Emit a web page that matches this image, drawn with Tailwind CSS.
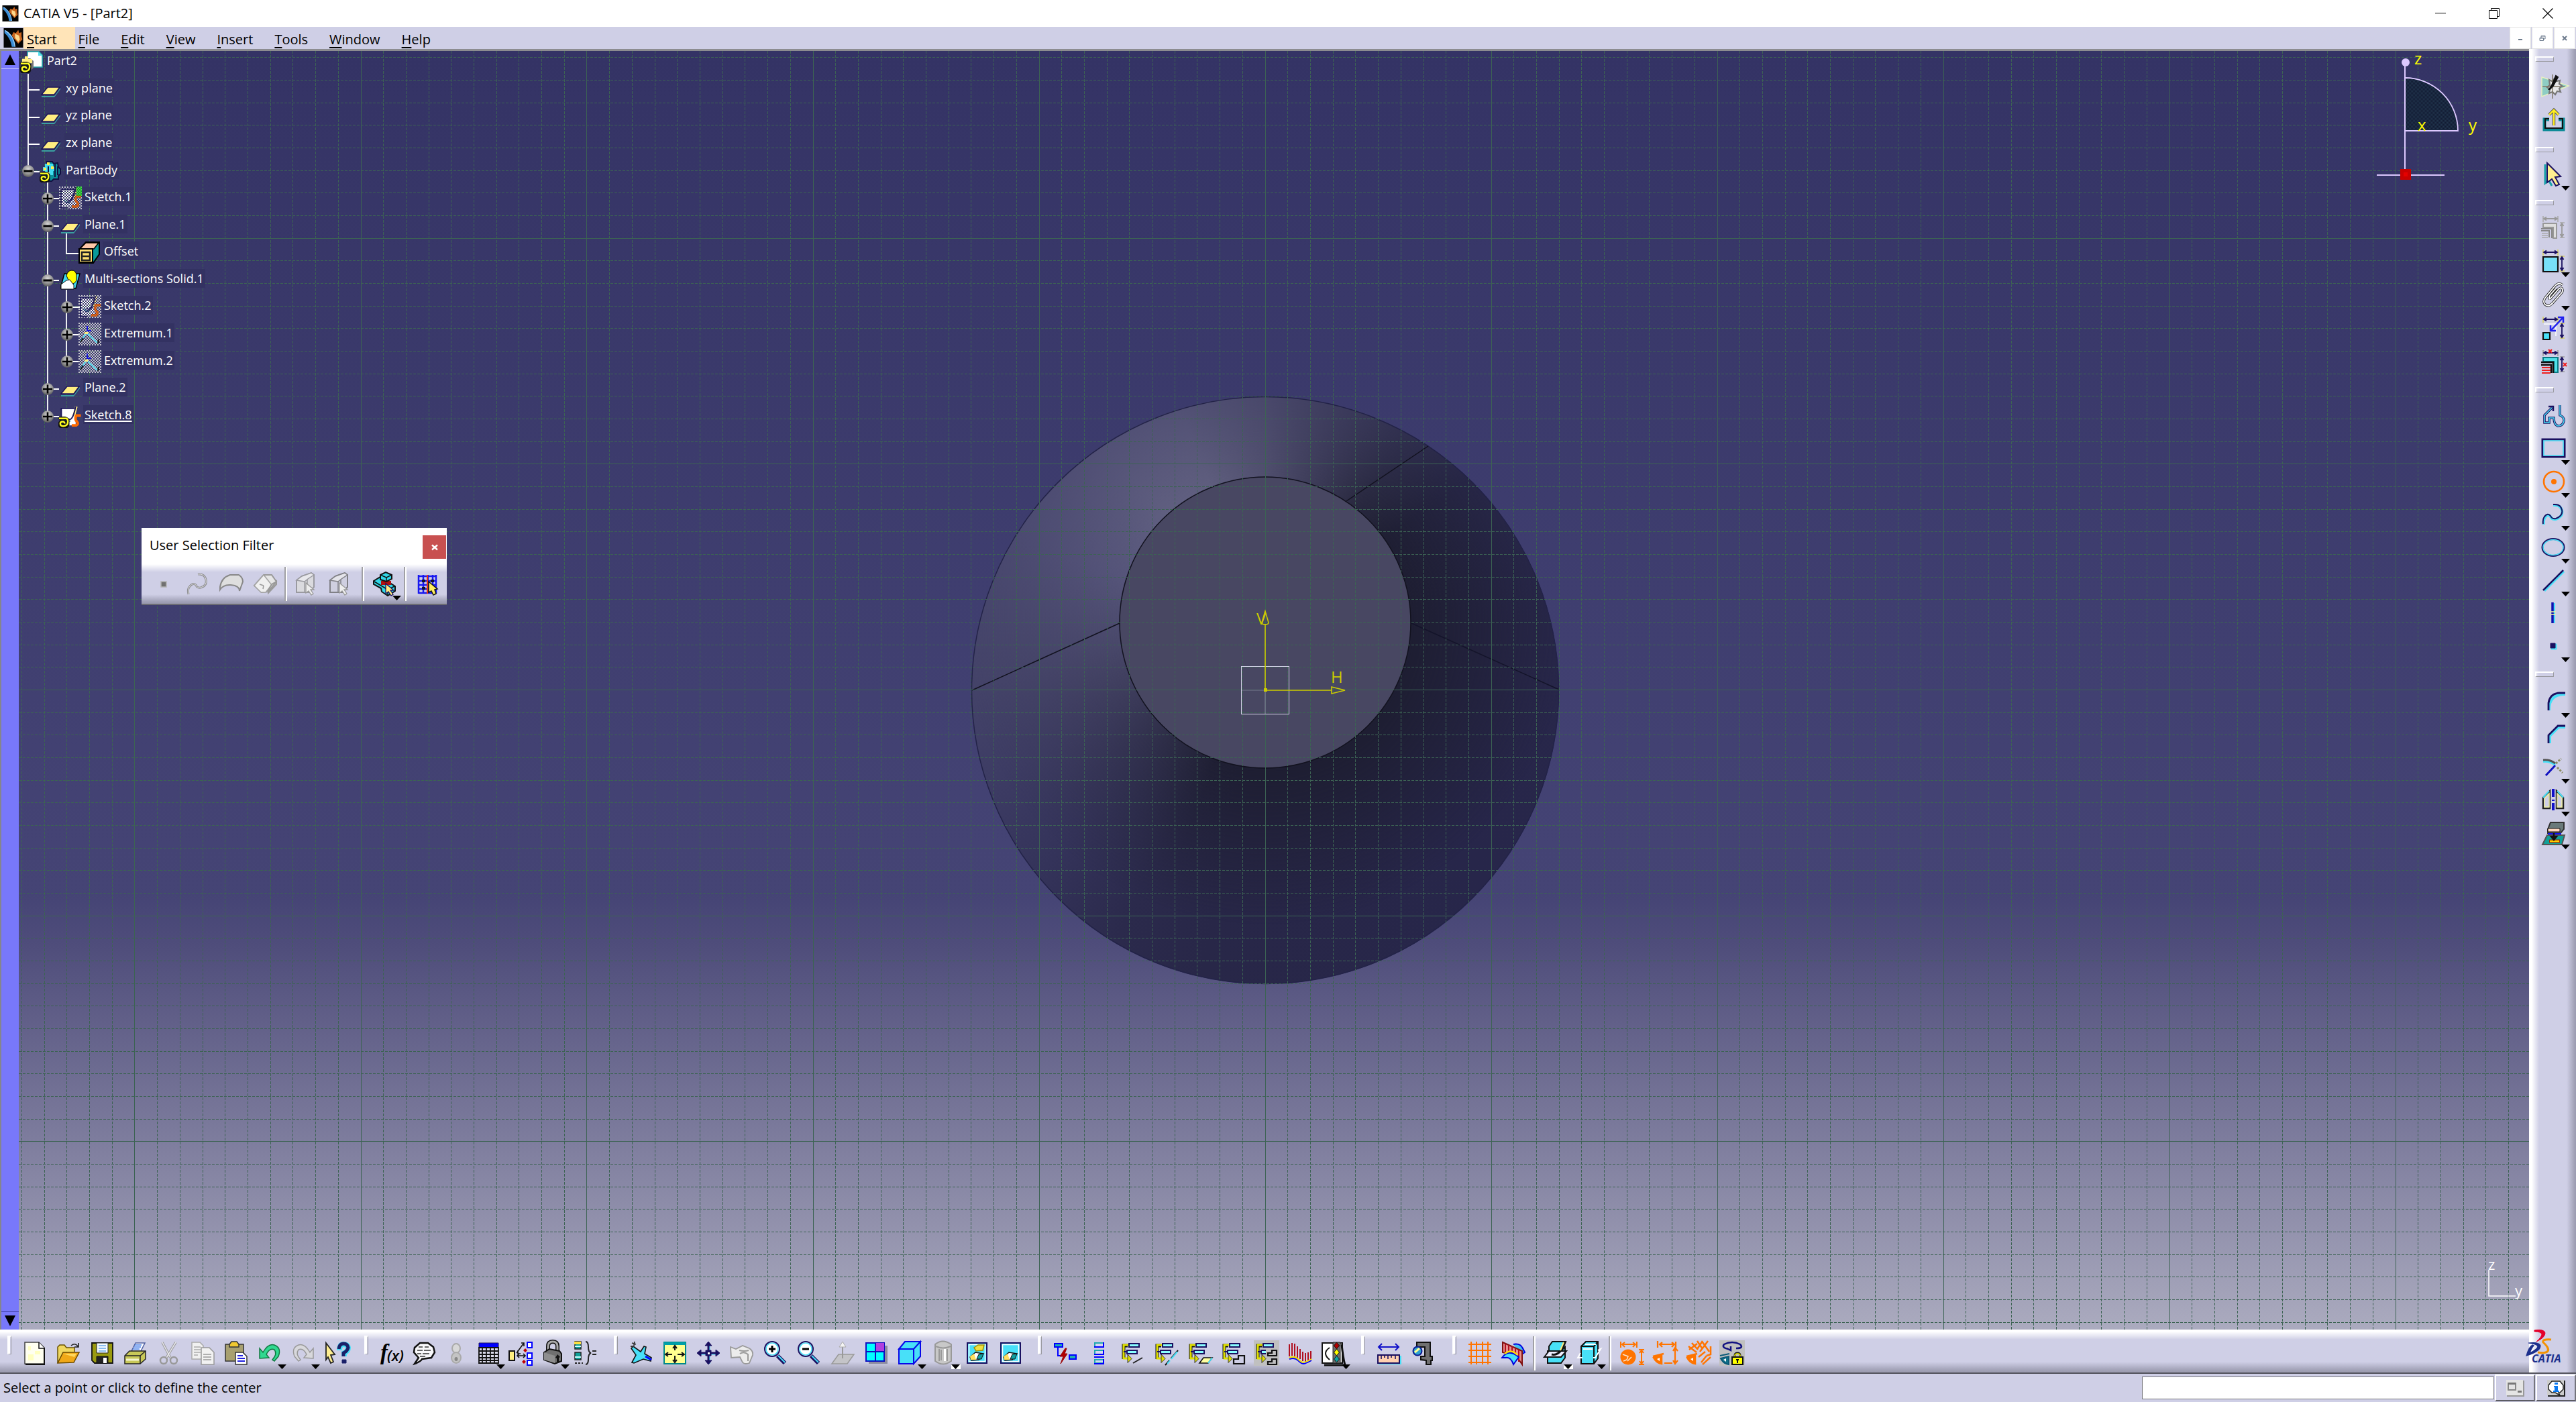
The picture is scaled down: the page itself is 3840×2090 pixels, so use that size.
<!DOCTYPE html>
<html lang="en">
<head>
<meta charset="utf-8">
<title>CATIA V5 - [Part2]</title>
<script src="https://cdn.jsdelivr.net/npm/@tailwindcss/browser@4"></script>
</head>
<body class="flex h-screen flex-col overflow-hidden bg-[#cfcfe6] font-['Open_Sans',sans-serif] text-xl leading-6 text-black">

<!-- shared defs -->
<svg class="absolute size-0" aria-hidden="true">
  <defs>
    <radialGradient id="ball" cx=".5" cy=".35" r=".65"><stop offset="0" stop-color="#d8d8d8"/><stop offset=".6" stop-color="#949494"/><stop offset="1" stop-color="#5a5a5a"/></radialGradient>
    <pattern id="chk" width="4" height="4" patternUnits="userSpaceOnUse"><path d="M0 0h2v2h-2zM2 2h2v2h-2z" fill="#c4c4cc"/></pattern>
    <pattern id="chkw" width="4" height="4" patternUnits="userSpaceOnUse"><path d="M0 0h2v2h-2zM2 2h2v2h-2z" fill="#fff"/></pattern>
    <mask id="half" maskUnits="userSpaceOnUse" x="0" y="0" width="34" height="34"><path d="M0 0h34v34H0z" fill="url(#chkw)"/></mask>
    <pattern id="hat" width="2" height="2" patternUnits="userSpaceOnUse"><path d="M0 0h2v2h-2z" fill="#101830"/><path d="M0 0h1v1h-1zM1 1h1v1h-1z" fill="#22364e"/></pattern>
    <linearGradient id="sky" x1="0" x2="0" y1="0" y2="1"><stop offset="0" stop-color="#343365"/><stop offset=".66" stop-color="#454475"/><stop offset=".7" stop-color="#4f4d7b"/><stop offset="1" stop-color="#ababbf"/></linearGradient>
    <symbol id="app" viewBox="0 0 24 24"><path d="M0 0h24v24H0z" fill="#050505"/><path d="M12 5l3 1 3-4 1 4 3-1v5l1 4-5 5-6-7-2-3z" fill="#c8641e"/><path d="M14 7l5 2 1 5-2 3-4-5z" fill="#ffd98c"/><path d="M1 2c8 4 12 12 13 21h-4C9 16 6 10 1 6z" fill="#3c8fd8"/><path d="M2 3c7 4 11 11 12 20" fill="none" stroke="#9bd4ff"/></symbol>
    <symbol id="plane" viewBox="0 0 30 16"><path d="M1 14h19l9-12v2l-9 12H1z" fill="#3aa0a0"/><path d="M10 1h18l-8 11H1z" fill="#ffee80" stroke="#1a1458" stroke-width="1.5"/></symbol>
    <symbol id="spiral" viewBox="0 0 18 18"><path d="M1 4q8-4 14 1v8q-1 4-8 4-5-1-5-5 0-4 5-4 4 0 3 4H7" fill="#123" stroke="#111" stroke-width="5"/><path d="M1 3h12q2 1 2 5 0 7-7 7-5 0-5-4 0-3 4-3 3 0 3 3" fill="none" stroke="#ffff20" stroke-width="2.6"/></symbol>
    <symbol id="sketch" viewBox="0 0 34 34"><path d="M3 4h22v26H3z" fill="#fff"/><path d="M2 4h23M3 4v28h10" fill="none" stroke="#1a1458" stroke-width="2"/><path d="M22 16L26 1" stroke="#ffee80" stroke-width="4"/><path d="M12 19q8 8 13-18" fill="none" stroke="#1a1458" stroke-width="2"/><path d="M7 20q4 6 10 3" fill="none" stroke="#3aa0a0" stroke-width="2"/><path d="M33 15h-7q-3 6 1 9 3 4-1 6h-7" fill="none" stroke="#ff6a00" stroke-width="4"/></symbol>
    <symbol id="gsketch" viewBox="0 0 34 34"><path d="M0 0h34v34H0z" fill="url(#chk)"/><g mask="url(#half)"><use href="#sketch" width="34" height="34"/></g><path d="M33 15h-7q-3 6 1 9 3 4-1 6h-7" fill="none" stroke="#ff6a00" stroke-width="3" opacity=".5"/><path d="M10 24q8 2 14-20" fill="none" stroke="#1a1458" stroke-width="2" opacity=".7"/></symbol>
    <symbol id="extr" viewBox="0 0 34 34"><path d="M0 0h34v34H0z" fill="url(#chk)"/><path d="M3 28l9-13 16 15" fill="none" stroke="#50d8f0" stroke-width="2"/><path d="M3 29l4-6M29 31l1-6" stroke="#111" stroke-width="2"/><path d="M13 5v7h6" fill="none" stroke="#1414d8" stroke-width="2"/><path d="M9 14h5v3H9z" fill="#ffee80"/></symbol>
    <symbol id="gear" viewBox="0 0 30 32"><path d="M9 2h8l2 3 6-1 1 6 3 3v7l-3 3v5h-7l-3 3h-6z" fill="#0b8f98" stroke="#101040" stroke-width="2"/><path d="M6 5h12v5h4v6h-4v6H6v-6H3v-6h3z" fill="#40dcf0"/><path d="M9 3h4v4H9zM15 9h4v4h-4zM4 11h4v4H4zM9 18h4v4H9z" fill="#ffee50"/><path d="M11 9v9M21 5v20M25 9v13" stroke="#101040" stroke-width="2"/></symbol>
    <symbol id="plus" viewBox="0 0 20 20"><ellipse cx="10" cy="10" rx="9" ry="9" fill="url(#ball)"/><path d="M3 10h14M10 3.500v13" stroke="#000" stroke-width="2.600"/></symbol>
    <symbol id="minus" viewBox="0 0 20 20"><ellipse cx="10" cy="10" rx="9" ry="9" fill="url(#ball)"/><path d="M3.500 10h13" stroke="#000" stroke-width="3"/></symbol>
  </defs>
</svg>

<header class="flex h-10 shrink-0 items-center bg-white">
  <svg class="ml-[3px] h-6 w-[25px]"><use href="#app"/></svg>
  <h1 class="ml-[7px] text-xl">CATIA V5 - [Part2]</h1>
  <div class="ml-auto flex h-full">
    <button class="grid w-20 place-items-center" aria-label="Minimize"><svg class="size-4" viewBox="0 0 16 16"><path d="M0 7.500h16" stroke="#000"/></svg></button>
    <button class="grid w-20 place-items-center" aria-label="Restore"><svg class="size-4" viewBox="0 0 16 16" fill="none" stroke="#000"><path d="M.5 3.500h12v12H.5zM3.500 3.500v-3h12v12h-3"/></svg></button>
    <button class="mr-[2px] grid w-20 place-items-center" aria-label="Close"><svg class="size-4" viewBox="0 0 16 16"><path d="M.5.500l15 15M15.500.500l-15 15" stroke="#000" stroke-width="1.200"/></svg></button>
  </div>
</header>

<nav class="flex h-[33px] shrink-0 items-stretch bg-[#cfcfe6] decoration-1 underline-offset-4">
  <svg class="mt-[2px] ml-[5px] h-[29px] w-[30px]"><use href="#app"/></svg>
  <button class="bg-[#ffe4b8] pt-1 pr-[27px] pl-[5px]"><u>S</u>tart</button>
  <button class="pt-1 pr-[27px] pl-[5px]"><u>F</u>ile</button>
  <button class="pt-1 pr-[27px] pl-[5px]"><u>E</u>dit</button>
  <button class="pt-1 pr-[27px] pl-[5px]"><u>V</u>iew</button>
  <button class="pt-1 pr-[27px] pl-[5px]"><u>I</u>nsert</button>
  <button class="pt-1 pr-[27px] pl-[5px]"><u>T</u>ools</button>
  <button class="pt-1 pr-[27px] pl-[5px]"><u>W</u>indow</button>
  <button class="pt-1 pr-[27px] pl-[5px]"><u>H</u>elp</button>
  <div class="ml-auto flex gap-px pr-px">
    <button class="grid w-8 place-items-center border border-[#e2e2e2] bg-white" aria-label="Minimize document"><svg class="size-[10px]" viewBox="0 0 10 10"><path d="M2 7h6" stroke="#6d7b8d" stroke-width="2"/></svg></button>
    <button class="grid w-8 place-items-center border border-[#e2e2e2] bg-white" aria-label="Restore document"><svg class="size-[10px]" viewBox="0 0 10 10" fill="none" stroke="#6d7b8d"><path d="M1 4.500h5.500v4H1zM3 4V1.500h6v4.500H7M3 2h6M1 5h5"/></svg></button>
    <button class="grid w-8 place-items-center border border-[#e2e2e2] bg-white" aria-label="Close document"><svg class="size-[10px]" viewBox="0 0 10 10"><path d="M2 2l6 6M8 2l-6 6" stroke="#6d7b8d" stroke-width="2"/></svg></button>
  </div>
</nav>

<div class="flex min-h-0 flex-1 border-b-2 border-[#55555f]">
  <div class="flex min-w-0 flex-1 flex-col">
    <main class="relative flex min-h-0 flex-1 border-t-[3px] border-t-[#8c8c90] bg-[#454475]">
      <!-- tree scroll strip -->
      <div class="flex w-7 shrink-0 flex-col justify-between border-l-2 border-[#85858c] bg-[#7878fa]">
        <button class="grid h-[27px] place-items-center border-b border-[#c8c8ff]" aria-label="Scroll up"><svg class="h-4 w-4" viewBox="0 0 16 16"><path d="M8 0l8 16H0z"/></svg></button>
        <button class="grid h-[27px] place-items-center border-t border-[#3c3ca0]" aria-label="Scroll down"><svg class="h-4 w-4" viewBox="0 0 16 16"><path d="M8 16l8-16H0z"/></svg></button>
      </div>

      <div class="relative min-w-0 flex-1">
        <!-- 3D scene -->
        <svg class="absolute inset-0 h-full w-full" viewBox="28 76 3742 1906" preserveAspectRatio="xMidYMid slice">
          <path d="M28 76h3742v1906H28z" fill="url(#sky)"/>
          <foreignObject x="1448" y="591" width="876" height="876">
            <div class="relative h-full w-full overflow-hidden rounded-full bg-[conic-gradient(at_438px_337px,#434268_0deg,#38375c_30deg,#2b2a50_55deg,#28274a_90deg,#27264a_140deg,#282748_190deg,#2b2a4c_205deg,#34335a_222deg,#3d3c64_240deg,#444369_258deg,#48476e_290deg,#48476f_330deg,#434268_360deg)]">
              <div class="h-full w-full bg-[conic-gradient(at_438px_337px,#504f6e_0deg,#3a3955_22deg,#29293f_38deg,#1f1f33_55deg,#1e1e32_90deg,#1e1e32_190deg,#1f1f33_200deg,#2a2a42_215deg,#3a3957_238deg,#49486a_262deg,#56557a_288deg,#605f80_318deg,#5f5e7e_338deg,#504f6e_360deg)] [mask-image:radial-gradient(circle_at_438px_337px,black_217px,transparent_450px)]"></div>
            </div>
          </foreignObject>
          <circle cx="1886" cy="1029" r="437.500" fill="none" stroke="#232348" stroke-width="1.500"/>
          <g stroke="#12121f" stroke-width="1.500" fill="none">
            <circle cx="1886" cy="928" r="217" fill="#484762"/>
            <path d="M1449 1029l220-100M2129 665l-122 82"/><path d="M2104 929l220 99" stroke="#14142a"/>
          </g>
          <g id="grid" stroke="#3c6353" shape-rendering="crispEdges"></g>
          <path d="M1851 1029h35v35M1886 1029v35" stroke="#77768e" fill="none"/>
          <path d="M1850.500 993.500h71v71h-71z" fill="none" stroke="#d4d4e8" stroke-width="1" shape-rendering="crispEdges"/>
          <g fill="none" stroke="#cccc00" stroke-width="1.600">
            <path d="M1886 1029V930M1886 1029h99M1886 911l-5 17q0 3 5 3t5-3zM2005 1029l-20-5v10z"/>
          </g>
          <path d="M1884 1026h5v5h-5z" fill="#cccc00"/>
          <g fill="#cccc00" class="font-['Open_Sans',sans-serif] text-[24px]"><text x="1873" y="931">V</text><text x="1984" y="1018">H</text></g>
        </svg>

        <!-- specification tree -->
        <svg class="absolute top-0 left-0 h-[600px] w-[300px]" viewBox="28 76 300 600">
          <g stroke="#fff" stroke-width="1.800" fill="none"><path d="M42 110v145M42 134h17M42 175h17M42 215h17M42 256h17M71 270v350M71 296h17M71 337h17M99 348v30h20M71 418h17M99 432v107M99 458h20M99 499h20M99 539h20M71 580h17M71 621h17"/></g>
          <path d="M41 77h17l5 5v18H41z" fill="#fff" stroke="#2aa" stroke-width="1.500"/><path d="M57 77v6h6z" fill="#5de"/>
          <path d="M33 87h12l5 4v10l-5 5H33z" fill="#777"/><path d="M37 84h5v4h6v6h-6v3h-6v-3h-3v-6h4z" fill="#ffee80"/>
          <use href="#spiral" x="30" y="92" width="17" height="17"/>
          <use href="#plane" x="61" y="129" width="30" height="16"/><use href="#plane" x="61" y="169" width="30" height="16"/><use href="#plane" x="61" y="210" width="30" height="16"/>
          <use href="#gear" x="61" y="239" width="30" height="32"/><use href="#spiral" x="59" y="256" width="16" height="16"/>
          <use href="#gsketch" x="88" y="278" width="34" height="34"/><path d="M114 278h8v14h-8z" fill="#0d0" opacity=".6"/>
          <use href="#plane" x="90" y="332" width="30" height="16"/>
          <path d="M118 372l10-11h20v18l-9 13h-21z" fill="#0a9a9a" stroke="#000" stroke-width="2"/><path d="M119 371l9-9h19l-7 9z" fill="#ffc8a8" stroke="#000" stroke-width="1.500"/><path d="M118 371h20v20h-20z" fill="#ffe070" stroke="#000" stroke-width="2"/><path d="M122 376h12v12h-12zM122 382h12" fill="none" stroke="#222" stroke-width="2.500"/>
          <path d="M91 426l5-18h23l-6 22H91z" fill="#40d8f0" stroke="#000" stroke-width="1.500"/><path d="M99 411q2-8 8-8t7 7v8q-2 5-9 6z" fill="#ff0" stroke="#000"/><path d="M91 431v-7l8-6 5-1 6 8v6z" fill="#fff" stroke="#111"/>
          <use href="#gsketch" x="117" y="440" width="34" height="34"/><use href="#extr" x="117" y="481" width="34" height="34"/><use href="#extr" x="117" y="522" width="34" height="34"/>
          <use href="#plane" x="90" y="575" width="30" height="16"/>
          <use href="#sketch" x="88" y="605" width="34" height="33"/><use href="#spiral" x="87" y="621" width="17" height="17"/>
          <use href="#minus" x="32" y="245" width="20" height="20"/><use href="#plus" x="61" y="286" width="20" height="20"/><use href="#minus" x="61" y="327" width="20" height="20"/><use href="#minus" x="61" y="408" width="20" height="20"/><use href="#plus" x="90" y="448" width="20" height="20"/><use href="#plus" x="90" y="489" width="20" height="20"/><use href="#plus" x="90" y="529" width="20" height="20"/><use href="#plus" x="61" y="570" width="20" height="20"/><use href="#plus" x="61" y="611" width="20" height="20"/>
        </svg>
        <ul class="absolute -top-[6px] left-0 grid h-[568px] grid-rows-14 items-center justify-items-start text-lg text-white *:bg-[#333262] *:px-[2px]">
          <li class="ml-10">Part2</li>
          <li class="ml-17">xy plane</li>
          <li class="ml-17">yz plane</li>
          <li class="ml-17">zx plane</li>
          <li class="ml-17">PartBody</li>
          <li class="ml-24">Sketch.1</li>
          <li class="ml-24">Plane.1</li>
          <li class="ml-[125px]">Offset</li>
          <li class="ml-24">Multi-sections Solid.1</li>
          <li class="ml-[125px]">Sketch.2</li>
          <li class="ml-[125px]">Extremum.1</li>
          <li class="ml-[125px]">Extremum.2</li>
          <li class="ml-24">Plane.2</li>
          <li class="ml-24 underline decoration-2 underline-offset-2">Sketch.8</li>
        </ul>

        <!-- compass -->
        <svg class="absolute top-0 right-0 h-[204px] w-[240px] overflow-visible font-['Open_Sans',sans-serif] text-[24px]" viewBox="3530 76 240 204">
          <path d="M3585 116a79 79 0 0 1 79 79h-79z" fill="url(#hat)" stroke="#dcc8ff" stroke-width="1.800"/>
          <path d="M3585 94v160M3543 261h101" stroke="#dcc8ff" stroke-width="2"/>
          <circle cx="3586" cy="93" r="6" fill="#dcc8ff"/><path d="M3578 252h16v16h-16z" fill="#c80000"/><path d="M3583 257h6v6h-6z" fill="#e60000"/>
          <g fill="#ff0"><text x="3599" y="96">z</text><text x="3604" y="195">x</text><text x="3680" y="195">y</text></g>
        </svg>
        <svg class="absolute right-0 bottom-0 h-[112px] w-[80px] font-['Open_Sans',sans-serif] text-[22px]" viewBox="3690 1870 80 112">
          <path d="M3710 1893v39h40" fill="none" stroke="#fff" stroke-width="1.500"/>
          <g fill="#fff"><text x="3709" y="1893">z</text><text x="3749" y="1932">y</text></g>
        </svg>

        <!-- floating toolbar -->
        <section class="absolute top-[711px] left-[183px] w-[455px] border-b-2 border-[#6c6c74] bg-white" aria-label="User Selection Filter">
          <div class="flex h-[54px] items-start justify-between pr-px pl-3">
            <h2 class="pt-[14px] text-xl leading-6">User Selection Filter</h2>
            <button class="mt-[11px] grid size-[35px] place-items-center bg-[#c85050]" aria-label="Close"><svg class="size-[10px]" viewBox="0 0 10 10"><path d="M1 1.500l8 7M9 1.500l-8 7" stroke="#fff" stroke-width="2.400"/></svg></button>
          </div>
          <div id="filter" class="flex h-[59px] items-center bg-[linear-gradient(#fff_0,#cfcfe6_12px,#cfcfe6_45px,#9c9cb2_57px)] pl-[9px]"></div>
        </section>
      </div>
    </main>

    <div id="bottom" class="flex h-16 shrink-0 bg-[linear-gradient(#fff_0,#fff_3px,#cfcfe6_15px,#cfcfe6_48px,#a3a3b8_60px,#9a9aae_64px)] pl-[11px]"></div>
  </div>

  <aside class="flex w-[70px] shrink-0 flex-col justify-between bg-[linear-gradient(90deg,#fff_0,#fff_4px,#cfcfe6_15px,#cfcfe6_56px,#a0a0b5_68px,#9c9cb2_70px)]">
    <div id="right" class="flex flex-col items-start pt-[11px] pl-[9px]"></div>
    <svg class="mb-3 -ml-2 h-[52px] w-[74px] overflow-visible" viewBox="3762 1984 74 52" role="img" aria-label="CATIA">
      <path d="M3778 1985q15-2 16 4 0 7-13 13 8-7 8-11-1-4-11-4z" fill="#e4002b" stroke="#e4002b"/>
      <path d="M3769 2004q16-2 18 4 0 9-21 15 4-14 9-16l2 1q-3 3-6 11 12-6 12-10-1-3-14-5z" fill="#1c2f8c" stroke="#1c2f8c" stroke-width="1.200"/>
      <path d="M3803 1999q-14-1-12 4 9 8 7 13-3 4-15 2M3791 2003q10 9 7 13" fill="none" stroke="#f39200" stroke-width="3"/>
      <text x="3774" y="2033" class="font-['Open_Sans',sans-serif] text-[16px] font-bold italic" fill="#1c2f8c">CATIA</text>
    </svg>
  </aside>
</div>

<footer class="flex h-[42px] shrink-0 items-center gap-px bg-[#cfcfe6] pl-[5px]">
  <p class="flex-1 pb-px">Select a point or click to define the center</p>
  <input class="h-[34px] w-[525px] border border-[#77777c] bg-white px-2" type="text" aria-label="Command">
  <button class="grid h-10 w-[60px] place-items-center border-2 border-t-white border-r-[#74747c] border-b-[#5c5c64] border-l-white" aria-label="Dialog"><svg class="size-7" viewBox="0 0 28 28"><path d="M1 2h25v23H1z" fill="#e4e4e4"/><path d="M2 26h25V3" fill="none" stroke="#999" stroke-width="2"/><path d="M4 7h11v10H4z" fill="none" stroke="#888" stroke-width="2"/><path d="M4 6h11v3H4zM18 18h6v3h-6z" fill="#777"/></svg></button>
  <button class="grid h-10 w-[60px] place-items-center border-2 border-t-white border-r-[#74747c] border-b-[#5c5c64] border-l-white" aria-label="Information"><svg class="size-7" viewBox="0 0 28 28"><path d="M1 2h25v23H1z" fill="#ccc"/><path d="M2 26h25V3" fill="none" stroke="#222" stroke-width="2"/><path d="M8 4h12l5 6v6l-5 5h-2l2 4-7-4H8l-5-5v-6z" fill="#fff" stroke="#222" stroke-width="1.500"/><path d="M12 6h5v3h-5zM11 11h6v7h2v2h-9v-2h2v-5h-1z" fill="#0a78f0"/></svg></button>
</footer>

<script>
const N = '#1a1060', C = '#48e0f8', O = '#ff7400', G = '#8c8c8c';
const P = (d, s = 'none', w = 2, f = 'none') => `<path d="${d}" stroke="${s}" stroke-width="${w}" fill="${f}"/>`;
const drop = '<path d="M30 35h13l-6.500 7z" fill="#000"/>';
const dropBox = '<path d="M30 35h14v7H30z" fill="#fff"/>' + drop;
const cursor = (x, y, f = '#ffee80', s = N) => P(`M${x} ${y}v15l4-3 4 6 3-2-4-6h5z`, s, 1.3, f);
const mag = s => P('M21 22l11 11', N, 6) + P('M22 22l10 10', C, 2) + `<ellipse cx="13" cy="12" rx="11" ry="11" fill="#fff" stroke="${N}" stroke-width="2"/><ellipse cx="13" cy="12" rx="9" ry="9" fill="none" stroke="${C}" stroke-width="1.500"/>` + P(s, '#000', 3);
const treeIc = x => P('M11 7H5v20', '#111', 5) + P('M13 6H5v20h7', '#e0e000', 3) + P('M5 16h5', N, 2) + P('M11 20l6 6.500-6 6z', '#333', 1, '#e0e000') + P('M13 4h15v5H13z', N, 2, '#8ff') + P('M10 14h15v5H10z', N, 2, '#8ff') + x;
const box3d = (s, f, top) => P('M4 12l8-6 14-5 4 3v18l-7 8H4z', s, 2, f) + P('M4 12l8-6 14-5 4 3-9 6-5 4z', s, 1.500, top) + P('M16 14v16M20 11v16', s, 1.500);
const dim = (c, e) => P('M3 1v9M25 1v9M28 11h7M28 33h7', e, 1.600) + P('M5 5h18M31 13v18M8 2.500L4 5l4 2.500M20 2.500L24 5l-4 2.500M28.500 16l2.500-4 2.500 4M28.500 28l2.500 4 2.500-4', c, 1.800);
const cone = c => P('M0 23l16-4M1 25l12-3v12q-8-1-12-9z', c, 2.500, c) + P('M6 27l4-2v5z', 'none', 0, '#fff');
const I = {
  new: P('M3 2h21l8 8v24H3z', '#444', 1.500, '#fffff0') + P('M8 8h4v6H8zM8 20h8v9H8zM18 15h8v5h-8z', 'none', 0, '#ffffc0') + P('M32 10v25H4', '#111', 2) + P('M24 2v9h8', '#111', 1.500, '#fff'),
  open: P('M2 33V9l3-3h7l3 4h12v6', '#6a5200', 1.500, '#f0d860') + P('M2 33l8-16h24l-8 15z', '#6a4a00', 1.500, '#f0a818') + P('M10 19h20l-3 5z', 'none', 0, '#ffd860') + P('M22 7q6-5 10 1M33 3v6h-6', '#222', 1.600),
  save: P('M3 3h31v30H7l-4-4z', '#111', 1.800, '#9a9a10') + P('M10 3h17v15H10z', '#222', 1, '#f4faff') + P('M13 7h11M13 11h11M13 15h11', '#68a8e8', 1.500) + P('M10 23h17v10H10z', '#111', 1, '#222') + P('M20 25h5v8h-5z', 'none', 0, '#fff'),
  print: P('M12 15l6-12h14l-6 12z', '#5060a0', 1.500, '#fff') + P('M17 6h10M16 9h10M14 12h10', '#3c78e8', 1.500) + P('M2 22l7-7h24v12l-8 7H2z', '#222', 1.500, '#c8c858') + P('M2 22h23v12M25 22l8-7', '#222', 1.500) + P('M4 28h19', '#f4f4d0', 3),
  cut: P('M8 2l12 23M28 2L14 25', '#999', 3.500) + P('M8 2l12 23M28 2L14 25', '#e8e8ee', 1.500) + `<ellipse cx="10" cy="29" rx="5" ry="5" fill="none" stroke="#999" stroke-width="2.500"/><ellipse cx="25" cy="29" rx="5" ry="5" fill="none" stroke="#999" stroke-width="2.500"/>`,
  copy: P('M2 2h12l5 5v20H2z', '#aaa', 1.500, '#f0f0f0') + P('M5 9h10M5 13h10M5 17h10M5 21h6', '#aaa', 1.500) + P('M16 10h12l7 7v18H16z', '#999', 1.500, '#f2f2f2') + P('M19 20h12M19 24h12M19 28h12', '#999', 1.500),
  paste: P('M2 5h27v25H2z', '#333', 1.500, '#a8a070') + P('M8 5l3-4h8l3 4v4H8z', '#333', 1.500, '#f0c830') + P('M17 17h11l6 6v12H17z', '#333', 1.500, '#fff') + P('M20 22h8M20 26h11M20 30h11', '#2020e0', 1.800),
  undo: P('M8 17Q16 3 25 6q11 4 6 17l-6 7-3-2q8-9 3-15-7-3-12 7l4 5-14 1V11z', '#107840', 1.500, '#30d890') + drop,
  redo: P('M28 17Q20 3 11 6Q0 10 5 23l6 7 3-2q-8-9-3-15 7-3 12 7l-4 5 14 1V11z', '#999', 1.500, '#d8d8dc') + drop,
  help: P('M22 14q0-9 6-9t7 5q0 5-6 8v5', C, 8) + P('M21 12q1-8 7-8t7 6q-1 5-7 8v5', '#1a2068', 5) + P('M26 28h6v5h-6z', '#1a2068', 1, '#1a2068') + P('M2 3l13 17-6 1 4 10-4 2-4-9-3 4z', '#222', 1.800, '#ffee90'),
  fx: '<text x="1" y="28" font-size="33" font-style="italic" font-family="Liberation Serif,serif" font-weight="bold">f</text><text x="11" y="30" font-size="22" font-style="italic" font-family="Open Sans,sans-serif" font-weight="600">(x)</text>',
  note: P('M12 3h12l8 6 2 8-5 8-14 2q-2 4-11 7l6-9-7-8 1-7z', '#111', 2.500, '#f8f8fa') + P('M10 9h6M19 9h6M8 14h8M18 14h10M8 19h6M16 19h10M12 23h8', '#333', 1.500),
  rings: `<ellipse cx="18" cy="11" rx="6" ry="7" fill="#d8d8d8" stroke="#aaa" stroke-width="2"/><ellipse cx="18" cy="25" rx="7" ry="8" fill="#c4c4c4" stroke="#aaa" stroke-width="2"/><ellipse cx="18" cy="27" rx="2.500" ry="3" fill="#888"/>`,
  table: P('M4 3h29v7H4z', N, 1, '#0000ff') + P('M4 10h29v23H4zM4 15h29M4 20h29M4 25h29M4 29h29M9 10v23M15 10v23M21 10v23M27 10v23', '#111', 1.800, '#dcdcec') + drop,
  relate: P('M1 15h8v14H1z', '#111', 2, '#ffee80') + P('M12 18l11-15M19 3h4v5M14 14v5h4M13 22h12M16 19l-3 3 3 3M22 19l3 3-3 3', '#111', 1.600) + P('M28 2h7v8h-7zM28 18h7v8h-7zM28 29h7v7h-7z', '#0000ff', 2, '#fff') + P('M22 14l3-3 3 3-3 3zM20 31l3-3 3 3-3 3z', 'none', 0, '#c00000'),
  lock: P('M11 15V8q0-7 7-7t7 7v7', '#111', 6) + P('M11 15V8q0-7 7-7t7 7v7', '#aaa', 3) + P('M5 17l8-5 15 3 3 4v11l-10 4-16-6z', '#111', 2, '#707070') + P('M5 17l16 5v11l-16-5z', 'none', 0, '#8e8e8e') + P('M25 20l4 4-2 1v6h-3v-5l-2-1z', 'none', 0, '#111') + drop,
  equiv: P('M3 1h9v11H3zM3 17h9v11H3z', '#222', 1.500, '#10a098') + P('M2 1h10v4H2z', 'none', 0, '#ffe040') + P('M3 8h9M3 24h9', '#cff', 2) + P('M3 33h3M8 33h3M13 33h2', '#222', 2) + P('M19 1q4 0 4 8t4 9q-4 1-4 9t-4 8M29 15h6M29 20h6', '#222', 2),
  fly: P('M4 32l6-11L3 11l3-3 11 8 5-8 3 1-2 10 10 6-1 5-11-3L7 33z', '#111', 1.600, C) + P('M4 3l6 2M2 8h5M8 1l-1 6', '#333', 1.800) + P('M24 23l9 5', '#0000ff', 3),
  fit: P('M2 2h32v32H2z', '#008888', 2, '#ffff90') + P('M2 4h32', '#00a0a8', 4) + P('M18 8v6M18 22v8M5 20h9M22 20h9M15 11l3-4 3 4M15 28l3 4 3-4M8 17l-4 3 4 3M28 17l4 3-4 3', '#111', 2),
  pan: P('M19 4v30M4 19h30', C, 3) + P('M18 3v30M3 18h30', N, 3) + P('M13 7l5-6 5 6zM13 29l5 6 5-6zM7 13l-6 5 6 5zM29 13l6 5-6 5z', N, 1, N) + P('M14 14h8v8h-8z', N, 1, N) + P('M17 17h3v3h-3z', 'none', 0, '#fff'),
  hand: P('M1 9l8 3 10-5 10 4q6 4 5 10l-5 12q-9 3-11-3l-3-6-13 1z', '#999', 1.800, '#ececec') + P('M14 14q8 2 14 0M15 19q6-4 12 1v10', '#999', 2),
  zin: mag('M8 12h10M13 7v10'), zout: mag('M8 12h10'),
  normal: P('M2 34l10-14h23L25 34z', '#999', 1.500, '#c4c4c8') + P('M18 26V8', '#999', 2) + P('M13 9l5-8 5 8z', '#aaa', 1, '#f4f4f4'),
  multi: P('M7 7h28v27H7z', 'none', 0, '#8c8ca0') + P('M3 3h27v27H3z', '#1010c0', 2, '#00ffff') + P('M17 3h13v13H17z', 'none', 0, '#b040e0') + P('M17 3v27M3 16h27', '#1010c0', 2),
  cube: P('M2 12h22v22H2zM2 12L11 1h23l-10 11zM24 12L34 1v22l-10 11z', '#0808e8', 2, C) + drop,
  cyl: P('M6 5q11-9 24 0v25q-12 9-24 0z', '#999', 2, '#c8c8c8') + P('M7 8q11 5 22 0M12 12v18M24 12v18M15 13v16', '#999', 2) + P('M19 12h3v18h-3z', 'none', 0, '#fff') + dropBox,
  hide: P('M4 3h29v30H4z', N, 2, C) + P('M6.500 5.500h24v25h-24z', '#fff', 1.500, C) + P('M14 10l6-4h9l-2 8-10 1z', '#a09000', 1.500, '#f0e040') + P('M8 24l8-7 12 2-7 9-11 1z', '#111', 1.500, '#fff') + P('M18 27l3-7 7-1-3 8z', '#111', 1, '#10a0a0') + P('M8 23l6-4 3 9H9z', 'none', 0, '#ffe060'),
  swap: P('M4 3h29v30H4z', N, 2, C) + P('M6.500 5.500h24v25h-24z', '#fff', 1.500, C) + P('M8 24l8-7 12 2-7 9-11 1z', '#111', 1.500, '#fff') + P('M18 27l3-7 7-1-3 8z', '#111', 1, '#10a0a0') + P('M8 23l6-4 3 9H9z', 'none', 0, '#ffe060'),
  link: P('M2 4h12v5H2z', '#0000ff', 2, '#20b0b0') + P('M7 10v12h8', '#0000ff', 2) + P('M24 21h10v6H24z', '#0000ff', 2, '#20b0b0') + P('M18 11l-8 12h5l-4 11 10-15h-4l3-8z', '#900', 1, '#b00000'),
  list: P('M12 3h13v6H12zM12 14h13v6H12zM12 28h13v5H12z', '#20a8b0', 2, '#d8d8f0') + P('M11 9h14V2M11 20h14v-7M11 24h15M11 34h14v-7', '#0000ff', 2),
  t1: treeIc(P('M19 33l14-8', '#222', 2)), t2: treeIc(P('M17 36l19-22', '#111', 2) + P('M20 34l15-18', C, 2) + P('M23 26l4 4', '#cfcfe6', 3)),
  t3: treeIc(P('M18 33l6-8h13l-6 8z', '#111', 1.600, '#ffffa0') + P('M31 33l6-8', C, 2)),
  t4: treeIc(P('M19 34v-7h7v-5h9v12z', '#111', 2.200, '#cfcfe6')),
  t5: '<path d="M-1-1h38v38H-1z" fill="#c0c0c0"/>' + treeIc(P('M17 10h20v14H17z', 'none', 0, '#c0c0c0') + P('M20 22v-4h6v-4h7v8zM20 35v-4h6v-4h7v8z', '#111', 2.200)),
  anal: P('M2 5v18M6 3v19M10 4v19M14 8v17M18 12v15M22 16v14M26 18v13M30 17v13M34 15v12', '#b01020', 2) + P('M2 27q8-3 13 2t8 5 12-5', '#0000ff', 2) + P('M2 25q8-3 13 2t8 5 12-5', '#f0e000', 2),
  traffic: P('M1 3h30v30H1z', '#111', 2, '#fff') + P('M30 5q2 20 5 31H4', '#111', 3) + P('M12 10q-12 8 0 18', '#111', 2) + P('M17 2h11v31H17z', '#222', 1, '#707070') + P('M22.500 2l4 5-4 5-4-5z', '#111', 1, '#b00000') + P('M22.500 12l4 5-4 5-4-5z', '#111', 1, '#ff0') + P('M22.500 22l4 5-4 5-4-5z', '#111', 1, '#10a0a0') + drop,
  ruler: P('M3 9h30M8 4L3 9l5 5M28 4l5 5-5 5', '#1010c8', 2) + P('M3 34h33V22', C, 2) + P('M2 21h32v12H2z', N, 2, '#ffd0b0') + P('M7 21v6M12 21v4M17 21v6M22 21v4M28 21v6', N, 1.600),
  caliper: P('M10 2h20v21h3v6h-2v6h-7v-6l-8-1v-5h6V9H10z', '#111', 2, '#707070') + '<circle cx="11" cy="15" r="6.500" fill="#30a0d0" stroke="#0a1a90" stroke-width="2"/>' + P('M7 17l7-6', '#ffff90', 3),
  grid: P('M1 5h34M1 14h34M1 23h34M1 32h34M5 1v34M13 1v34M22 1v34M30 1v34', O, 2),
  cutp: P('M18 5q10-2 14 6l3 6-6 4', '#0000e0', 2, '#40c0f0') + P('M2 2l29 13v20L22 22 2 17z', '#801010', 2, '#e89090') + P('M6 4v18M11 6v17M16 8v17M21 11v16M26 13v18', '#b01020', 2) + P('M1 25q10-14 25-1l-8 11q-4-12-12-10z', '#0000e0', 2, C) + P('M5 19q10-8 19 2', '#ffe000', 2.500),
  sketchc: P('M6 33V15h20l6-6v16l-6 8z', '#111', 2, C) + P('M8 8l5-7h20l-4 10-6 8H8z', '#111', 2, C) + P('M1 24l7-9h26l-8 9z', '#111', 2, '#eef') + P('M12 20q8 2 14-6l5-12', '#111', 3) + P('M25 14l5-12', '#ffee80', 2) + dropBox,
  cutc: P('M6 8l7-7h18v25l-6 8H6zM6 8h19v26M25 8l6-7', '#111', 2, C) + P('M9 12h14M12 5h16', '#fff', 2) + P('M5 18l-4 7h26l8-13-4 2', '#fff', 2) + P('M8 23h16v10H8z', 'none', 0, C) + drop,
  dimo: P('M2 1v9M26 1v9M29 13h8M29 35h8M4 5h20M33 14v20M8 2L4 5l4 4M20 2l4 3-4 4M30 18l3-4 3 4M30 30l3 4 3-4', O, 2) + `<circle cx="13" cy="24" r="11.500" fill="${O}"/>` + P('M5 20l8 3-2 5-5 2M12 30l6-6', '#fbe6d2', 1.500),
  conso: P('M7 0v10M11 5h20M14 2l-4 3 4 4M28 2l4 3-4 4M34 1v9M33 11v22M30 15l3-5 4 5M30 29l3 5 4-5M17 33h12', O, 2.200) + cone(O),
  hatcho: P('M3 8l12 9M8 3l9 10M4 13L16 4M16 0l8 12M24 0L16 12M24 2l10 14M32 0L20 16M36 8v12l-6 2M30 22L22 32M18 24l10-8M36 24L24 35', O, 2.500) + cone(O),
  lockc: '<path d="M-1-1h38v38H-1z" fill="#c0c0c0"/>' + P('M12 12Q2 10 6 5q12-6 24 0 6 6-6 6M16 8v6l-6-3', '#101080', 2.500) + P('M0 22l14-3M1 26l12-3v12q-8-1-12-9z', '#0a5a78', 2, '#107088') + P('M5 28l4-2v5z', 'none', 0, '#fff') + P('M22 25v-3q0-4 4-4t4 4v3', '#111', 3) + P('M22 24v-2q0-3 4-3t4 3v2', '#ff0', 1.500) + P('M18 24h16v11H18z', '#111', 2, '#ffff00') + P('M26 27v6M24 28h4', '#111', 2),
  pt: P('M13 14h8v8h-8z', '#b4b4b4', 1.500, '#707070'),
  sp: P('M18 3q10-1 12 8t-8 12q-5 1-7-4-4-4-9 2-4 4-2 12', '#8e8e92', 3) + P('M18 3q10-1 12 8t-8 12q-5 1-7-4-4-4-9 2-4 4-2 12', '#dcdcdc', 1),
  surf: P('M1 22Q3 8 16 4h13q6 4 6 10l-5 14q0-8-13-9Q6 18 1 26z', '#888', 2, '#dedede'),
  solid: P('M2 20L16 4l12 0 7 10-12 15-10 1z', '#999', 2, '#e6e6e6') + P('M2 20l14-16 12 15-9 11H12z', '#a4a4a4', 1.500, '#f0f0f0') + P('M23 29l12-15v4L23 31zM35 14l-7 4-6 10', '#999', 2, '#c4c4c4') + P('M10 18l6 2M16 20l-1 5', '#999', 1.500),
  b1: box3d('#9a9aa0', '#dadade', '#e8e8ec') + cursor(18, 16, '#eee', '#999'),
  b2: box3d('#808086', '#cfcfe0', '#e4e4ea') + cursor(18, 16, '#eee', '#999'),
  prod: P('M2 13l10-6 22 14v7l-11 7-9-6-1-5-11-6z', '#111', 2, '#30d8e8') + P('M13 13h15v6H13z', 'none', 0, '#b01010') + P('M12 4l8-4 9 4v6l-8 4-9-3z', '#111', 2, '#30d8e8') + P('M12 4l9 4 8-4M21 8v5M3 14l20 12v8M23 26l10-5', '#111', 1.500) + cursor(20, 17) + drop,
  gridsel: P('M5 4v28M12 4v28M19 4v28M26 4v28M31 4v28M5 6h26M5 13h26M5 19h26M5 25h26M5 31h26', '#1818f0', 2.500) + P('M10 11h5v4h-5zM10 22h5v4h-5zM23 11h5v4h-5z', 'none', 0, '#101030') + P('M18 4v28', '#e83010', 2) + P('M20 14v16l4-2 3 6 4-2-2-6 4-1z', '#111', 1.500, '#ffee60'),
  axis: P('M1 4l40 13L1 33z', '#e8f0c0', 1.500, '#8ecdc4') + P('M12 8l4 2 4-4 3 4 5-1-1 5 4 3-4 4 2 5-5-1-3 5-4-4-5 2 1-6-4-3 4-3z', '#777', 2.200, '#e8e8e8') + P('M17 0v36M2 18h33', '#807868', 1.500) + P('M12 22l4-6 6-14 3 2-7 13-5 5z', '#111', 2, '#111'),
  exit: P('M12 17H5v15h28V17h-7', '#0b8a96', 5) + P('M12 16H6v14h26V16h-6', '#111', 2) + P('M19 26V4M12 10l7-7 7 7', '#555', 4.500) + P('M19 26V4M12 10l7-7 7 7', '#ffee20', 2.500),
  arrow: P('M6 3v28l5-5 5 9', '#18a0a8', 3) + P('M9 1l20 20-8 1 6 11-5 2-6-10-7 5z', N, 2, '#fff090') + drop,
  dimg: dim('#999', '#aaa') + P('M3 12h20v22h-5V18H3z', '#999', 2, '#dedede') + P('M0 20h16v14M0 23h12v10', '#888', 2) + P('M1 27h9M1 30h9M1 33h9', '#aaa', 1.500),
  dimc: dim(N, '#d8d060') + P('M3 12h22v22H3z', '#111', 2.200, '#78e0f8') + drop,
  clip: P('M13 25L26 10q3-3 5-1 2 3 0 6L17 31q-6 6-11 2-4-4 0-10L21 5q6-6 11-1M13 25q-2-3 1-7l8-9', '#2a2a2a', 3.600) + P('M13 25L26 10q3-3 5-1 2 3 0 6L17 31q-6 6-11 2-4-4 0-10L21 5q6-6 11-1M13 25q-2-3 1-7l8-9', '#fff', 1.800) + drop,
  anim: dim(N, '#d8d060') + P('M4 12h18v18', '#fff', 1.500) + P('M14 22L33 2M33 10V2h-8M14 14v8h8', '#2020f0', 2.500) + P('M3 25h10v10H3z', '#111', 2.200, C),
  dimx: dim(N, '#999') + P('M3 12h22v22h-6V18H3z', '#0a7a84', 2, '#50e0e8') + P('M0 19h18v16M0 23h15v12', '#111', 2.500) + P('M1 27h13M1 31h13M1 35h13', '#f02020', 2) + P('M11 0l5 5M16 0l-5 5M33 20l5 5M38 20l-5 5', '#f02020', 2),
  prof: P('M28 2v15q7 3 6 9-2 7-9 7-6-2-6-12h-7v7H5V17L18 4', N, 3.500) + P('M28 2v15q7 3 6 9-2 7-9 7-6-2-6-12h-7v7H5V17L18 4', C, 1.500) + P('M11 4h7v7', N, 2.500),
  rect: P('M2 4h33v26H2z', N, 3) + P('M4 6h29v22H4z', C, 1.600) + drop,
  circ: `<circle cx="19" cy="18" r="15" fill="none" stroke="${O}" stroke-width="2.600"/><circle cx="19" cy="18" r="4" fill="${O}"/>` + drop,
  spl: P('M18 4q11-1 13 8t-9 13q-6 1-8-4-4-5-8 1-3 4-2 11', C, 4) + P('M18 3q11-1 13 8t-9 13q-6 1-8-4-4-5-9 1-3 4-2 11', N, 2) + drop,
  ell: `<ellipse cx="18" cy="18" rx="16" ry="12.500" fill="none" stroke="${N}" stroke-width="3"/><ellipse cx="18" cy="18" rx="15" ry="11.500" fill="none" stroke="${C}" stroke-width="1.500"/>` + drop,
  line: P('M5 34L34 5', C, 3) + P('M3 33L33 3', N, 2.600) + drop,
  axl: P('M19 3v30', C, 4) + P('M17 2v31', '#1010b0', 3.500) + P('M14 16h8M14 20h8', '#f0f0a0', 1.500),
  dot: P('M15 15h8v8h-8z', C, 1, C) + P('M14 14h7v7h-7z', N, 1, N) + drop,
  corner: P('M12 31Q11 7 36 7', C, 4) + P('M11 31V20Q13 6 27 5h9', N, 2.800) + drop,
  chamf: P('M13 31V20L26 7h10', C, 4) + P('M11 31V19L25 5h11', N, 2.800),
  trim: P('M3 9q10-1 18 5', C, 4) + P('M3 7q10-1 18 5', '#555', 3) + P('M7 30l14-15', '#1010c0', 2.800) + P('M22 12l8-7M24 18l8 8', '#8a8a60', 3, 'none').replace('/>', ' stroke-dasharray="3 2"/>') + drop,
  mirror: P('M18 1v12M18 17v2M18 22v11', '#1010c8', 4) + P('M3 30V14L13 4v26zM33 30V14L23 4v26z', '#222', 2.500) + P('M5 28V15l7-7v20zM31 28V15l-7-7v20z', '#f0f0a0', 1.500) + P('M3 14L12 4M33 14L24 4', C, 2) + drop,
  proj: P('M2 35l7-14h26l-4 14z', '#555', 2, '#10a098') + P('M10 12l4-10h20v10l-5 6H10z', '#333', 2, '#6a7a7a') + P('M10 11h18v5H10z', '#111', 1, '#ffd8c0') + P('M10 19h20', '#1010f0', 2) + P('M12 30h16', '#a03000', 5) + P('M13 30h14', '#ffd000', 2.500) + P('M19 18v8M15 23l4 5 4-5z', '#111', 2.500, '#111') + drop,
};
const btn = (k, c) => `<button class="grid shrink-0 place-items-center ${c}" aria-label="${k}"><svg class="size-9 overflow-visible" viewBox="0 0 36 36">${I[k]}</svg></button>`;
const set = (ks, c) => ks.split(' ').map(k => btn(k, c)).join('');
const grip = c => `<span class="mt-[9px] h-[28px] w-[6px] shrink-0 border-t-2 border-r border-b border-l-4 border-t-white border-r-[#9a9aa0] border-b-[#9a9aa0] border-l-white ${c}"></span>`;
const sep = c => `<span class="h-[51px] w-1 shrink-0 border-l-2 border-r-2 border-l-[#a0a0a4] border-r-white ${c}"></span>`;
const B = 'mt-[10px] h-[50px] w-[50px]';
document.getElementById('bottom').innerHTML =
  grip('mr-[10px]') + set('new open save print cut copy paste undo redo help', B) +
  grip('ml-4 mr-[11px]') + set('fx note rings table relate lock equiv', 'mt-[10px] h-[50px] w-[48px]') +
  grip('ml-[19px] mr-[10px]') + set('fly fit pan hand zin zout normal multi cube cyl hide swap', B) +
  grip('ml-4 mr-[10px]') + set('link list t1 t2 t3 t4 t5 anal traffic', B) +
  grip('ml-4 mr-[10px]') + set('ruler caliper', B) +
  grip('ml-5 mr-[10px]') + set('grid cutp', B) +
  sep('mt-[10px] ml-1 mr-[5px]') + set('sketchc cutc', B) +
  sep('mt-[10px] ml-1 mr-[5px]') + set('dimo conso hatcho lockc', B);
const hgrip = c => `<span class="h-2 w-7 border-t-2 border-r border-b border-l-2 border-t-white border-r-[#9a9aa0] border-b-[#9a9aa0] border-l-white ${c}"></span>`;
const R = 'h-[50px] w-[54px]', S = 'h-[49px] w-[54px]';
document.getElementById('right').innerHTML =
  hgrip('mb-3') + set('axis exit', R) + hgrip('mt-[15px] mb-2') + set('arrow', R) +
  hgrip('mt-[13px] mb-2') + set('dimg dimc clip anim dimx', R) +
  hgrip('mt-[13px] mb-[10px]') + set('prof rect circ spl ell line axl dot', S) +
  hgrip('mt-[14px] mb-3') + set('corner chamf trim mirror proj', S);
document.getElementById('filter').innerHTML =
  set('pt sp surf solid', 'size-[50px]') + sep('ml-1 mr-[3px]') + set('b1 b2', 'size-[50px]') + sep('ml-2 mr-[5px]') +
  set('prod', 'size-[50px]') + sep('ml-1 mr-[6px]') + set('gridsel', 'size-[50px]');

// sketch grid, 33.7 px step with a primary line every ten
let g = '';
for (let k = -56; k <= 56; k++) {
  const x = Math.round(1885.5 + 33.7 * k) + .5, y = Math.round(1028 + 33.67 * k) + .5;
  const d = k % 10 ? ' stroke-dasharray="4 2"' : '';
  g += `<path d="M${x} 76V1982"${d}/>`;
  if (Math.abs(k) < 29) g += `<path d="M28 ${y}H3770"${d}/>`;
}
document.getElementById('grid').innerHTML = g;
</script>
</body>
</html>
